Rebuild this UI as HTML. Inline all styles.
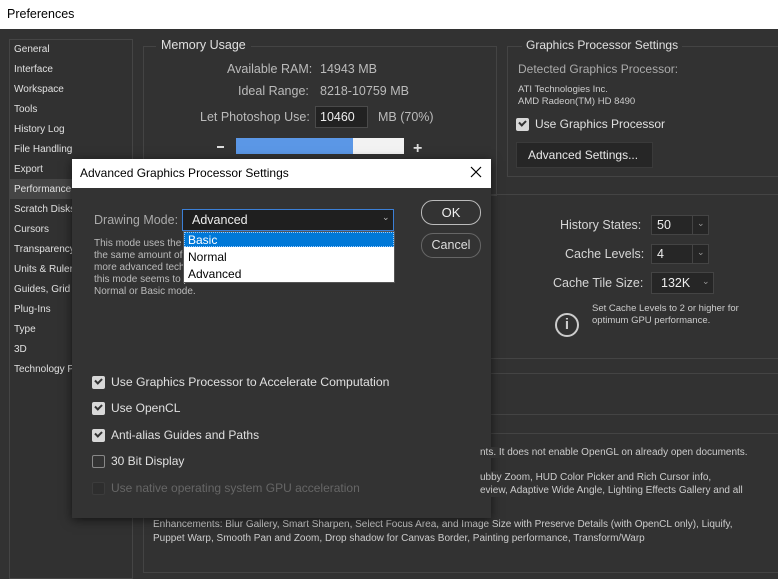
<!DOCTYPE html><html><head><meta charset="utf-8"><style>
*{margin:0;padding:0;box-sizing:border-box}
body{width:778px;height:570px;overflow:hidden;background:#323232;font-family:"Liberation Sans",sans-serif;color:#d6d6d6;position:relative}
.a{position:absolute;white-space:nowrap}
.s{font-size:10px}
.m{font-size:12px}
.l{font-size:12.5px}
.box{position:absolute;border:1px solid #444}
.cb{position:absolute;width:13px;height:13px;border-radius:2px;background:#d8d8d8}
.cb::after{content:"";position:absolute;left:3px;top:2px;width:5px;height:3px;border-left:2px solid #333;border-bottom:2px solid #333;transform:rotate(-45deg)}
.cbo{position:absolute;width:13px;height:13px;border-radius:2px;border:1px solid #888}
</style></head><body>
<div class="a" style="left:0;top:0;width:778px;height:29px;background:#fff"></div>
<div class="a" style="left:7px;top:7px;font-size:12.5px;color:#000">Preferences</div>
<!-- sidebar -->
<div class="box" style="left:9px;top:39px;width:124px;height:540px;border-color:#454545;background:#313131"></div>
<div class="a" style="left:10px;top:179px;width:70px;height:20px;background:#454545"></div>
<div class="a s" style="left:14px;top:40px;line-height:20px;color:#e0e0e0">General<br>Interface<br>Workspace<br>Tools<br>History Log<br>File Handling<br>Export<br>Performance<br>Scratch Disks<br>Cursors<br>Transparency<br>Units &amp; Rulers<br>Guides, Grid<br>Plug-Ins<br>Type<br>3D<br>Technology P</div>
<!-- right panels -->
<div class="box" style="left:143px;top:46px;width:354px;height:150px"></div>
<div class="a" style="left:156px;top:38px;background:#323232;padding:0 5px;font-size:12.5px;color:#e0e0e0">Memory Usage</div>
<div class="a l" style="left:227px;top:62px;color:#bbb">Available RAM:</div>
<div class="a l" style="left:320px;top:62px;color:#bbb">14943 MB</div>
<div class="a l" style="left:238px;top:84px;color:#bbb">Ideal Range:</div>
<div class="a l" style="left:320px;top:84px;color:#bbb">8218-10759 MB</div>
<div class="a l" style="left:200px;top:110px;color:#bbb">Let Photoshop Use:</div>
<div class="a" style="left:315px;top:106px;width:53px;height:22px;background:#222;border:1px solid #4a4a4a"></div>
<div class="a l" style="left:320px;top:110px;color:#eee">10460</div>
<div class="a l" style="left:378px;top:110px;color:#bbb">MB (70%)</div>
<div class="a" style="left:217px;top:146px;width:7px;height:2px;background:#ddd"></div>
<div class="a" style="left:236px;top:138px;width:168px;height:16px;background:#f2f2f2"></div>
<div class="a" style="left:236px;top:138px;width:117px;height:16px;background:#5b97e6"></div>
<div class="a" style="left:413px;top:140px;font-size:16px;color:#ddd;font-weight:bold">+</div>
<div class="box" style="left:507px;top:46px;width:280px;height:131px"></div>
<div class="a" style="left:522px;top:38px;background:#323232;padding:0 4px;font-size:12px;color:#e0e0e0">Graphics Processor Settings</div>
<div class="a m" style="left:518px;top:62px;color:#aaa">Detected Graphics Processor:</div>
<div class="a" style="left:518px;top:84px;font-size:9.5px;line-height:12px;color:#ccc">ATI Technologies Inc.<br>AMD Radeon(TM) HD 8490</div>
<div class="cb" style="left:516px;top:118px"></div>
<div class="a m" style="left:535px;top:117px;color:#e0e0e0">Use Graphics Processor</div>
<div class="a" style="left:516px;top:142px;width:137px;height:26px;background:#262626;border:1px solid #3a3a3a"></div>
<div class="a m" style="left:528px;top:148px;color:#e8e8e8">Advanced Settings...</div>
<div class="box" style="left:143px;top:194px;width:640px;height:165px"></div>
<div class="a l" style="left:560px;top:218px">History States:</div>
<div class="a" style="left:651px;top:215px;width:58px;height:20px;background:#262626;border:1px solid #444"></div>
<div class="a" style="left:692px;top:215px;width:1px;height:20px;background:#444"></div>
<div class="a l" style="left:657px;top:218px;color:#eee">50</div><div class="a" style="left:697px;top:218px;font-size:9px;color:#999">⌄</div>
<div class="a l" style="left:565px;top:247px">Cache Levels:</div>
<div class="a" style="left:651px;top:244px;width:58px;height:20px;background:#262626;border:1px solid #444"></div>
<div class="a" style="left:692px;top:244px;width:1px;height:20px;background:#444"></div>
<div class="a l" style="left:657px;top:247px;color:#eee">4</div><div class="a" style="left:697px;top:247px;font-size:9px;color:#999">⌄</div>
<div class="a l" style="left:553px;top:276px">Cache Tile Size:</div>
<div class="a" style="left:651px;top:272px;width:63px;height:22px;background:#262626;border:1px solid #444"></div>
<div class="a l" style="left:661px;top:276px;color:#eee">132K</div><div class="a" style="left:702px;top:276px;font-size:9px;color:#999">⌄</div>
<div class="a" style="left:592px;top:303px;font-size:9.5px;line-height:12px;color:#ccc">Set Cache Levels to 2 or higher for<br>optimum GPU performance.</div>
<div class="a" style="left:555px;top:313px;width:24px;height:24px;border:2px solid #ccc;border-radius:50%;text-align:center;font-size:15px;line-height:20px;font-weight:bold;color:#ccc">i</div>
<div class="box" style="left:143px;top:373px;width:640px;height:42px"></div>
<div class="box" style="left:143px;top:433px;width:640px;height:140px"></div>
<div class="a" style="left:153px;top:518px;font-size:10px;line-height:14px;color:#ccc">Enhancements: Blur Gallery, Smart Sharpen, Select Focus Area, and Image Size with Preserve Details (with OpenCL only), Liquify,<br>Puppet Warp, Smooth Pan and Zoom, Drop shadow for Canvas Border, Painting performance, Transform/Warp</div>
<!-- dialog -->
<div class="a" style="left:72px;top:159px;width:419px;height:359px;background:#333;box-shadow:0 2px 10px rgba(0,0,0,.6)"></div>
<div class="a" style="left:480px;top:447px;font-size:10px;color:#ccc;background:#323232">nts. It does not enable OpenGL on already open documents.</div>
<div class="a" style="left:480px;top:471px;font-size:10px;line-height:13px;color:#ccc;background:#323232">ubby Zoom, HUD Color Picker and Rich Cursor info,<br>eview, Adaptive Wide Angle, Lighting Effects Gallery and all</div>
<div class="a" style="left:72px;top:159px;width:419px;height:29px;background:#fff"></div>
<div class="a" style="left:80px;top:166px;font-size:12px;color:#000">Advanced Graphics Processor Settings</div>
<svg class="a" style="left:470px;top:166px" width="12" height="12"><path d="M1 1L11 11M11 1L1 11" stroke="#000" stroke-width="1.2"/></svg>
<div class="a l" style="left:94px;top:213px;color:#aaa">Drawing Mode:</div>
<div class="a" style="left:182px;top:209px;width:212px;height:22px;background:#1f1f1f;border:1px solid #3b7fd6"></div>
<div class="a l" style="left:192px;top:213px;color:#eee">Advanced</div>
<div class="a" style="left:382px;top:212px;font-size:9px;color:#bbb">⌄</div>
<div class="a s" style="left:94px;top:238px;line-height:12px;color:#bbb">This mode uses the<br>the same amount of<br>more advanced tech<br>this mode seems to p<br>Normal or Basic mode.</div>
<div class="a" style="left:183px;top:231px;width:212px;height:52px;background:#fff;border:1px solid #555"></div>
<div class="a" style="left:184px;top:232px;width:210px;height:15px;background:#0078d7;border:1px dotted #9cf"></div>
<div class="a m" style="left:188px;top:233px;color:#fff">Basic</div>
<div class="a m" style="left:188px;top:250px;color:#000">Normal</div>
<div class="a m" style="left:188px;top:267px;color:#000">Advanced</div>
<div class="a" style="left:421px;top:200px;width:60px;height:25px;border:1px solid #bbb;border-radius:12px;text-align:center;line-height:23px;font-size:13px;color:#eee">OK</div>
<div class="a" style="left:421px;top:233px;width:60px;height:25px;border:1px solid #666;border-radius:12px;text-align:center;line-height:23px;font-size:12.5px;color:#ddd">Cancel</div>
<div class="cb" style="left:92px;top:376px"></div><div class="a m" style="left:111px;top:375px;color:#e0e0e0;font-size:12.2px">Use Graphics Processor to Accelerate Computation</div>
<div class="cb" style="left:92px;top:402px"></div><div class="a m" style="left:111px;top:401px;color:#e0e0e0">Use OpenCL</div>
<div class="cb" style="left:92px;top:429px"></div><div class="a m" style="left:111px;top:428px;color:#e0e0e0">Anti-alias Guides and Paths</div>
<div class="cbo" style="left:92px;top:455px"></div><div class="a m" style="left:111px;top:454px;color:#e0e0e0">30 Bit Display</div>
<div class="cbo" style="left:92px;top:482px;border-color:#3c3c3c;background:#2e2e2e"></div><div class="a m" style="left:111px;top:481px;color:#666">Use native operating system GPU acceleration</div>
</body></html>
